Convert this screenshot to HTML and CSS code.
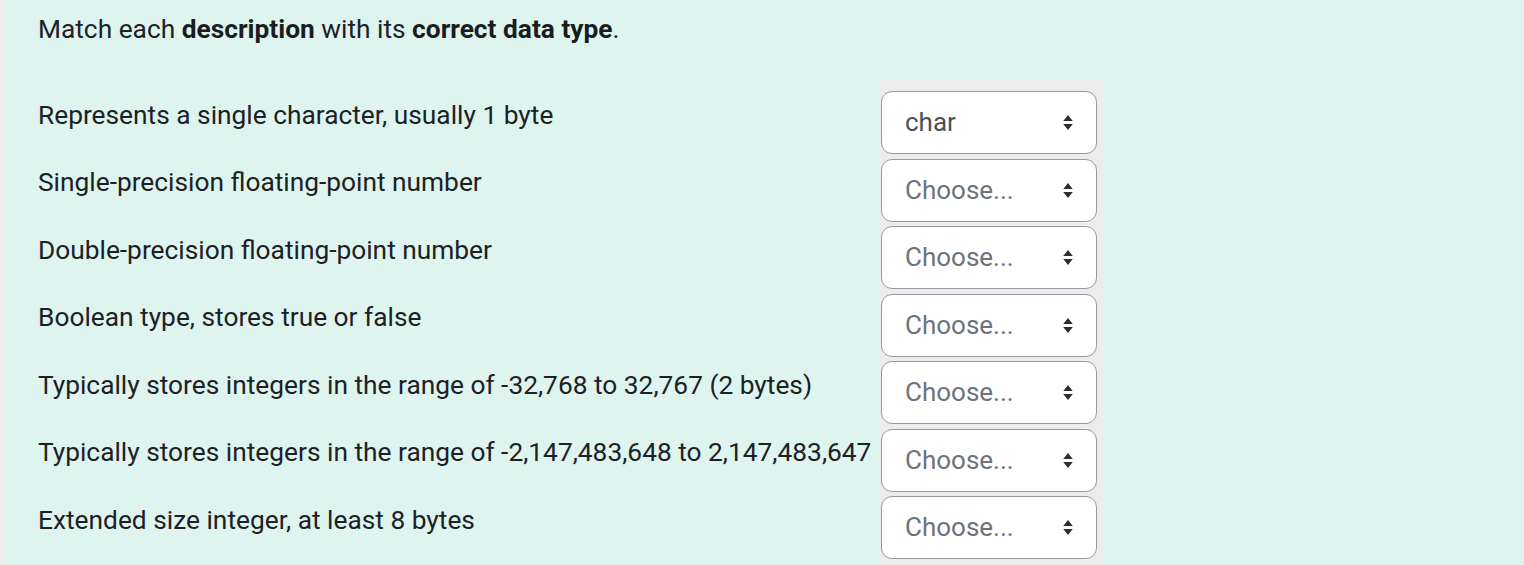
FILE: index.html
```html
<!DOCTYPE html>
<html lang="en">
<head>
<meta charset="utf-8">
<title>Match data types</title>
<link rel="stylesheet" href="styles.css">
</head>
<body>
<div class="que">
  <p class="qtext">Match each <strong>description</strong> with its <strong>correct data type</strong>.</p>
  <div class="answer">
    <div class="stems">
      <div class="stem">Represents a single character, usually 1 byte</div>
      <div class="stem">Single-precision floating-point number</div>
      <div class="stem">Double-precision floating-point number</div>
      <div class="stem">Boolean type, stores true or false</div>
      <div class="stem">Typically stores integers in the range of -32,768 to 32,767 (2 bytes)</div>
      <div class="stem">Typically stores integers in the range of -2,147,483,648 to 2,147,483,647</div>
      <div class="stem">Extended size integer, at least 8 bytes</div>
    </div>
    <div class="choices">
      <div class="select selected"><span>char</span><svg class="caret" viewBox="0 0 10 16" width="12" height="17"><path d="M5 1 L9.5 6.5 H0.5 Z M5 15 L9.5 9.5 H0.5 Z" fill="#2b2f33"/></svg></div>
      <div class="select"><span>Choose...</span><svg class="caret" viewBox="0 0 10 16" width="12" height="17"><path d="M5 1 L9.5 6.5 H0.5 Z M5 15 L9.5 9.5 H0.5 Z" fill="#2b2f33"/></svg></div>
      <div class="select"><span>Choose...</span><svg class="caret" viewBox="0 0 10 16" width="12" height="17"><path d="M5 1 L9.5 6.5 H0.5 Z M5 15 L9.5 9.5 H0.5 Z" fill="#2b2f33"/></svg></div>
      <div class="select"><span>Choose...</span><svg class="caret" viewBox="0 0 10 16" width="12" height="17"><path d="M5 1 L9.5 6.5 H0.5 Z M5 15 L9.5 9.5 H0.5 Z" fill="#2b2f33"/></svg></div>
      <div class="select"><span>Choose...</span><svg class="caret" viewBox="0 0 10 16" width="12" height="17"><path d="M5 1 L9.5 6.5 H0.5 Z M5 15 L9.5 9.5 H0.5 Z" fill="#2b2f33"/></svg></div>
      <div class="select"><span>Choose...</span><svg class="caret" viewBox="0 0 10 16" width="12" height="17"><path d="M5 1 L9.5 6.5 H0.5 Z M5 15 L9.5 9.5 H0.5 Z" fill="#2b2f33"/></svg></div>
      <div class="select"><span>Choose...</span><svg class="caret" viewBox="0 0 10 16" width="12" height="17"><path d="M5 1 L9.5 6.5 H0.5 Z M5 15 L9.5 9.5 H0.5 Z" fill="#2b2f33"/></svg></div>
    </div>
  </div>
</div>
</body>
</html>
```

FILE: styles.css
```css
html, body {
  margin: 0;
  padding: 0;
  background: #def5ef;
}

body {
  font-family: Roboto, "Liberation Sans", Arial, sans-serif;
  font-size: 26.3px;
  line-height: 1.5;
  color: #1d2125;
}

.que {
  height: 565px;
  box-sizing: border-box;
  background: #def5ef;
  border-left: 5px solid #ededed;
  padding-left: 33px;
  overflow: hidden;
}

.qtext {
  margin: 0;
  padding-top: 10px;
  height: 80px;
  box-sizing: border-box;
}

.qtext strong {
  font-weight: 700;
  color: #1a1d20;
}

.answer {
  display: flex;
  align-items: flex-start;
}

.stems {
  width: 842px;
  flex: none;
}

.stem {
  height: 67.5px;
  box-sizing: border-box;
  padding-top: 15.5px;
  white-space: nowrap;
}

.choices {
  flex: none;
  background: #ececec;
  padding: 11px 6px 20px 1px;
  display: flex;
  flex-direction: column;
  gap: 4.5px;
}

.select {
  width: 216px;
  height: 63px;
  box-sizing: border-box;
  background: #fff;
  border: 1.5px solid #959ba1;
  border-radius: 11px;
  display: flex;
  align-items: center;
  justify-content: space-between;
  padding: 0 22px 0 23px;
  font-size: 26px;
  color: #6c737a;
}

.select.selected {
  color: #495057;
}

.caret {
  display: block;
}
```
